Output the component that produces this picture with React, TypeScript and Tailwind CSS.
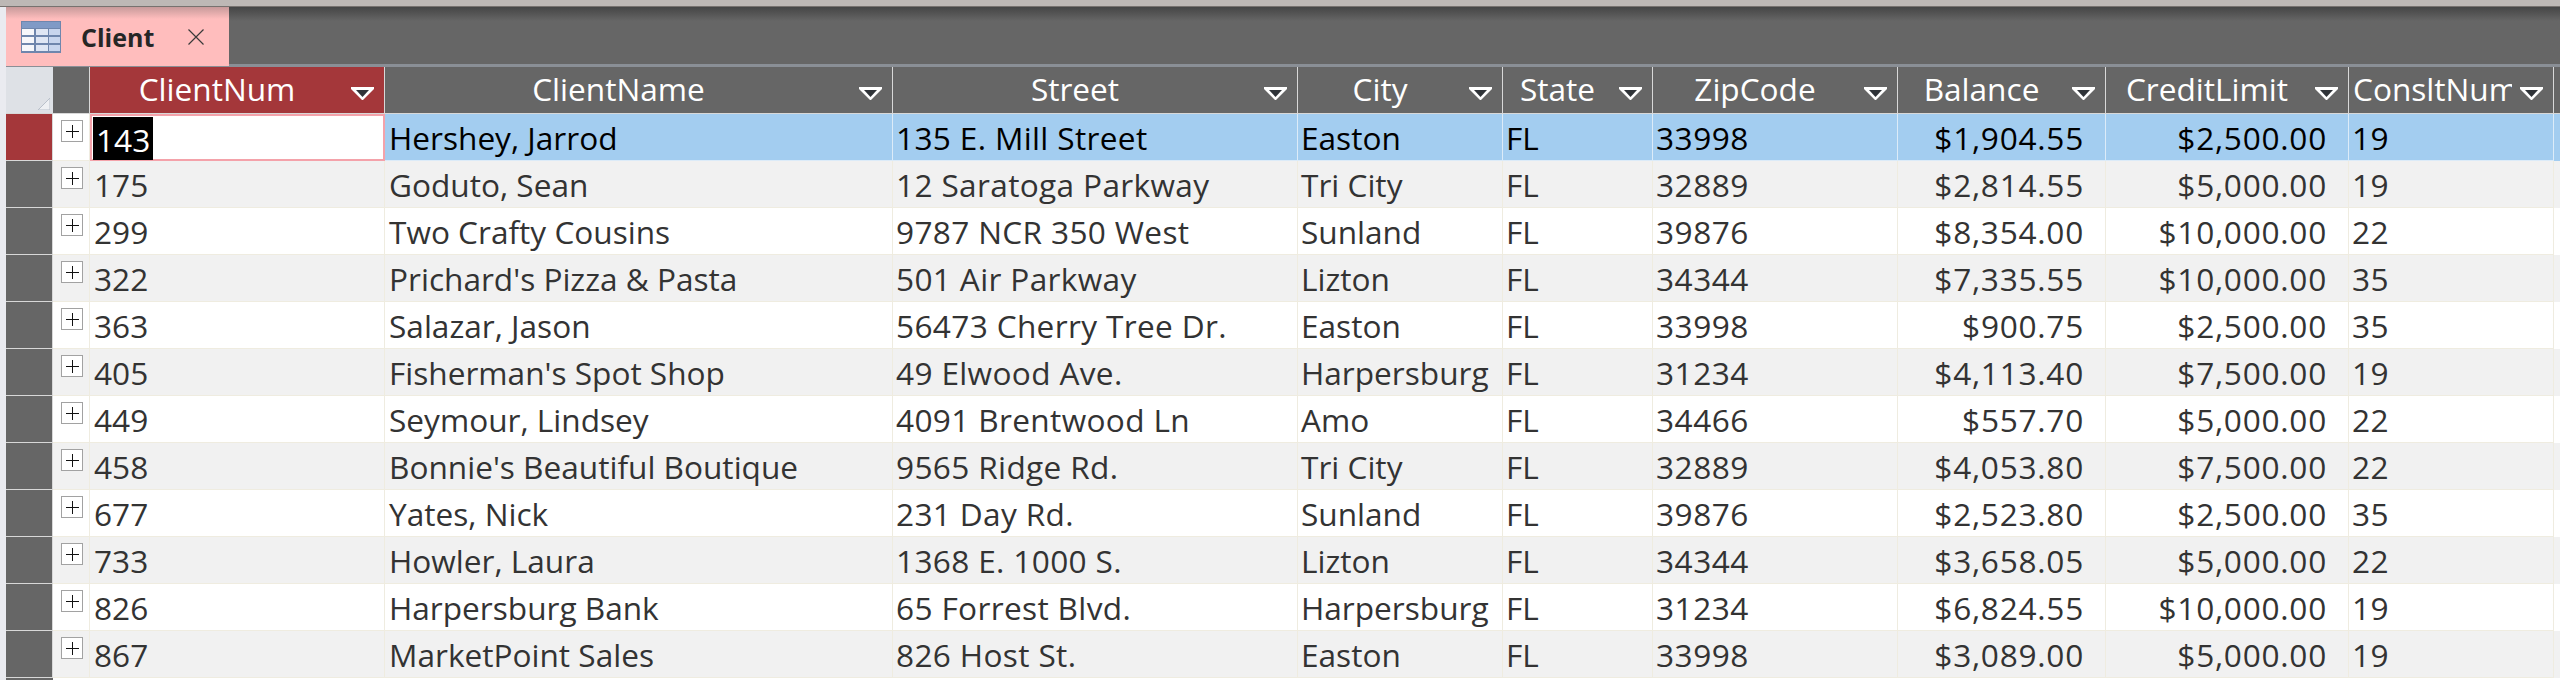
const columns = [
  { name: 'ClientNum', width: 295, key: 'num', cell: 'pl-[4px]' },
  { name: 'ClientName', width: 508, key: 'name', cell: 'pl-[4px]' },
  { name: 'Street', width: 405, key: 'street', cell: 'pl-[3px] tracking-[0.35px]' },
  { name: 'City', width: 205, key: 'city', cell: 'pl-[3px]' },
  { name: 'State', width: 150, key: 'state', cell: 'pl-[3px]' },
  { name: 'ZipCode', width: 245, key: 'zip', cell: 'pl-[3px] tracking-[0.5px]' },
  { name: 'Balance', width: 208, key: 'balance', cell: 'pr-[21px] text-right tracking-[0.75px]' },
  { name: 'CreditLimit', width: 243, key: 'limit', cell: 'pr-[21px] text-right tracking-[0.75px]' },
  { name: 'ConsltNum', width: 205, key: 'conslt', cell: 'pl-[3px] tracking-[0.5px]' },
] as const

type ColKey = (typeof columns)[number]['key']

const rows: Record<ColKey, string>[] = [
  { num: '143', name: 'Hershey, Jarrod', street: '135 E. Mill Street', city: 'Easton', state: 'FL', zip: '33998', balance: '$1,904.55', limit: '$2,500.00', conslt: '19' },
  { num: '175', name: 'Goduto, Sean', street: '12 Saratoga Parkway', city: 'Tri City', state: 'FL', zip: '32889', balance: '$2,814.55', limit: '$5,000.00', conslt: '19' },
  { num: '299', name: 'Two Crafty Cousins', street: '9787 NCR 350 West', city: 'Sunland', state: 'FL', zip: '39876', balance: '$8,354.00', limit: '$10,000.00', conslt: '22' },
  { num: '322', name: "Prichard's Pizza & Pasta", street: '501 Air Parkway', city: 'Lizton', state: 'FL', zip: '34344', balance: '$7,335.55', limit: '$10,000.00', conslt: '35' },
  { num: '363', name: 'Salazar, Jason', street: '56473 Cherry Tree Dr.', city: 'Easton', state: 'FL', zip: '33998', balance: '$900.75', limit: '$2,500.00', conslt: '35' },
  { num: '405', name: "Fisherman's Spot Shop", street: '49 Elwood Ave.', city: 'Harpersburg', state: 'FL', zip: '31234', balance: '$4,113.40', limit: '$7,500.00', conslt: '19' },
  { num: '449', name: 'Seymour, Lindsey', street: '4091 Brentwood Ln', city: 'Amo', state: 'FL', zip: '34466', balance: '$557.70', limit: '$5,000.00', conslt: '22' },
  { num: '458', name: "Bonnie's Beautiful Boutique", street: '9565 Ridge Rd.', city: 'Tri City', state: 'FL', zip: '32889', balance: '$4,053.80', limit: '$7,500.00', conslt: '22' },
  { num: '677', name: 'Yates, Nick', street: '231 Day Rd.', city: 'Sunland', state: 'FL', zip: '39876', balance: '$2,523.80', limit: '$2,500.00', conslt: '35' },
  { num: '733', name: 'Howler, Laura', street: '1368 E. 1000 S.', city: 'Lizton', state: 'FL', zip: '34344', balance: '$3,658.05', limit: '$5,000.00', conslt: '22' },
  { num: '826', name: 'Harpersburg Bank', street: '65 Forrest Blvd.', city: 'Harpersburg', state: 'FL', zip: '31234', balance: '$6,824.55', limit: '$10,000.00', conslt: '19' },
  { num: '867', name: 'MarketPoint Sales', street: '826 Host St.', city: 'Easton', state: 'FL', zip: '33998', balance: '$3,089.00', limit: '$5,000.00', conslt: '19' },
]

function SortArrow() {
  return (
    <svg width="23" height="13" viewBox="0 0 23 13" className="absolute right-[10px] top-[20px]">
      <path d="M0 0H23V2L12 13H11L0 2Z" fill="#fff" />
      <path d="M5 3H18L11.5 10Z" fill="#2f3338" />
    </svg>
  )
}

function TableIcon() {
  return (
    <svg width="40" height="32" viewBox="0 0 40 32">
      <rect width="40" height="32" fill="#6f86ad" />
      <rect x="1" y="1" width="38" height="6" fill="#809ac6" />
      {[8, 16, 24].map(y =>
        [1, 15, 28].map(x => (
          <rect key={`${x}-${y}`} x={x} y={y} width={x === 28 ? 11 : 12} height="6" fill={x === 1 ? '#f6f7fb' : x === 15 ? '#dfe6f4' : '#c8d5ee'} />
        )),
      )}
    </svg>
  )
}

function Expander() {
  return (
    <div className="mt-[6px] ml-[8px] flex h-[22px] w-[22px] items-center justify-center border border-[#a2a2a2] bg-white">
      <svg width="13" height="13" viewBox="0 0 13 13">
        <path d="M6.5 0V13M0 6.5H13" stroke="#111" strokeWidth="1" />
      </svg>
    </div>
  )
}

export default function App() {
  return (
    <div className="h-[680px] w-[2560px] overflow-hidden bg-[#666666] font-['Open_Sans',sans-serif] text-[31.6px]">
      <div className="h-[7px] bg-[#bdb8b5] border-b border-[#77726f]" />
      <div className="flex">
        <div className="w-[6px] shrink-0 bg-[#eaebf0]" />
        <div className="min-w-0 flex-1">
          {/* tab strip */}
          <div className="flex h-[60px] border-b-[3px] border-[#8a8f96] bg-[linear-gradient(#454545,#666666_14px)]">
            <div className="flex h-[59px] w-[223px] items-center bg-[linear-gradient(#c79a9a,#ffbdbd_12px)] pl-[15px]">
              <TableIcon />
              <span className="ml-[20px] pt-[2px] text-[25px] font-bold text-[#262626]">Client</span>
              <svg width="16" height="16" viewBox="0 0 16 16" className="ml-[34px]">
                <path d="M0.5 0.5L15.5 15.5M15.5 0.5L0.5 15.5" stroke="#3a3a3a" strokeWidth="1.2" />
              </svg>
            </div>
          </div>

          {/* header */}
          <div className="flex h-[47px] border-b border-[#d8d8d8]">
            <div className="relative w-[47px] shrink-0 bg-[#dee1e6]">
              <svg width="12" height="12" viewBox="0 0 12 12" className="absolute right-[3px] bottom-[3px]">
                <path d="M12 0V12H0Z" fill="#eef0f3" stroke="#b9c0ca" />
              </svg>
            </div>
            <div className="w-[37px] shrink-0 bg-[#666666] border-r border-[#d8d8d8]" />
            {columns.map((col, i) => (
              <div
                key={col.key}
                style={{ width: col.width }}
                className={`relative shrink-0 border-r border-[#d8d8d8] leading-[44px] whitespace-nowrap text-white ${i === 0 ? 'bg-[#a4373a] pr-[40px] text-center' : col.key === 'conslt' ? 'pl-[4px]' : 'pr-[40px] text-center'}`}
              >
                {col.key === 'conslt' ? (
                  <div className="w-[159px] overflow-hidden">{col.name}</div>
                ) : (
                  col.name
                )}
                <SortArrow />
              </div>
            ))}
          </div>

          {/* rows */}
          {rows.map((row, r) => {
            const active = r === 0
            const bg = active ? 'bg-[#a3cdf0]' : r % 2 === 1 ? 'bg-[#f1f1f1]' : 'bg-white'
            return (
              <div key={row.num} className={`flex h-[47px] ${active ? 'text-black' : 'text-[#333333]'}`}>
                <div className={`w-[47px] shrink-0 border-r border-b border-[#d8d8d8] ${active ? 'bg-[#a4373a]' : 'bg-[#666666]'}`} />
                <div className={`w-[37px] shrink-0 border-r border-b border-[#efece0] ${r % 2 === 1 ? 'bg-[#f1f1f1]' : 'bg-white'}`}>
                  <Expander />
                </div>
                {columns.map((col, c) =>
                  active && c === 0 ? (
                    <div key={col.key} style={{ width: col.width }} className="shrink-0 border-2 border-[#f4a2aa] bg-white pl-[1px]">
                      <span className="inline-block h-[43px] bg-black px-[3px] leading-[46px] text-white">{row[col.key]}</span>
                    </div>
                  ) : (
                    <div
                      key={col.key}
                      style={{ width: col.width }}
                      className={`shrink-0 overflow-hidden whitespace-nowrap border-r border-b leading-[48px] ${active ? 'border-[#dcebf8]' : 'border-[#efece0]'} ${bg} ${col.cell}`}
                    >
                      {row[col.key]}
                    </div>
                  ),
                )}
                <div className={`flex-1 ${bg}`} />
              </div>
            )
          })}
          <div className="flex h-[4px]">
            <div className="w-[47px] bg-[#666666]" />
            <div className="flex-1 bg-white" />
          </div>
        </div>
      </div>
    </div>
  )
}
